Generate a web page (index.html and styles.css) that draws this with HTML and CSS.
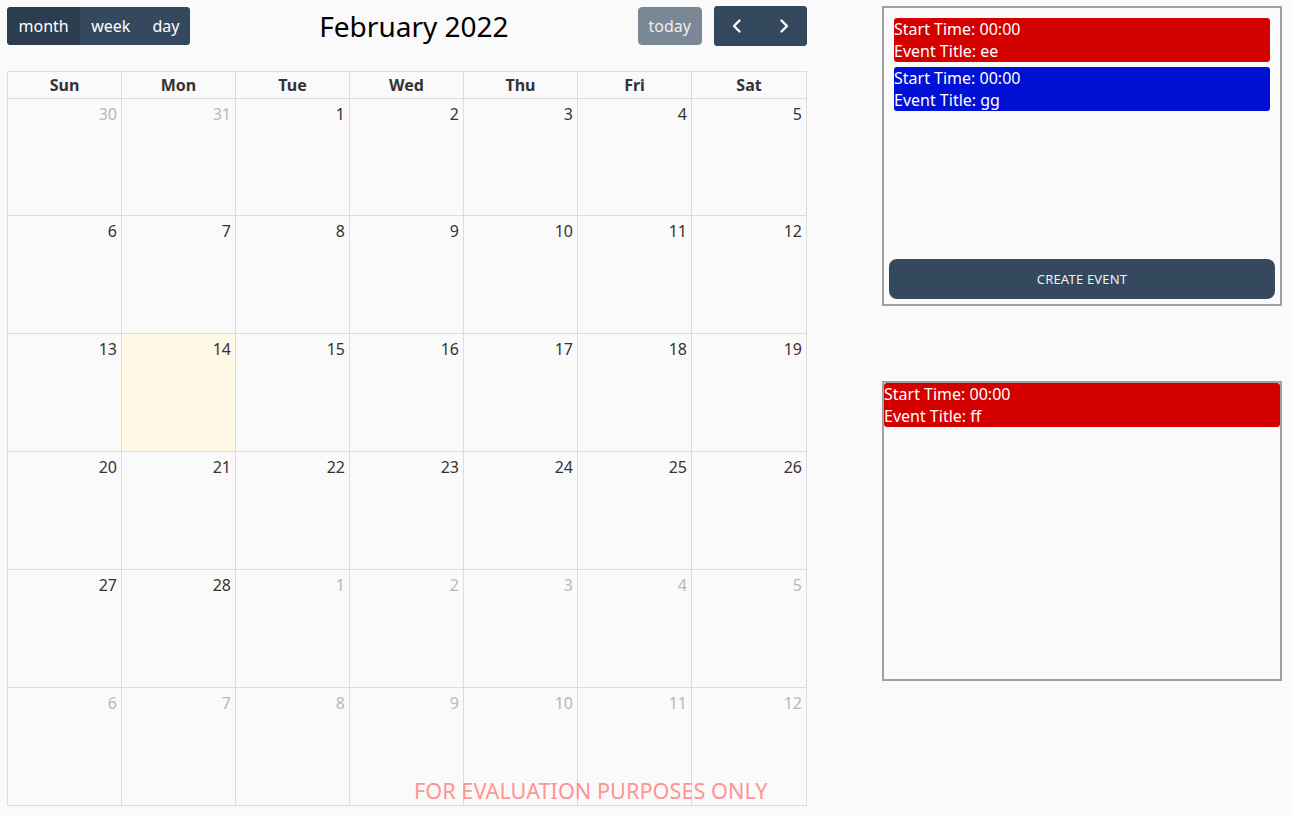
FILE: index.html
```html
<!DOCTYPE html>
<html>
<head>
<meta charset="utf-8">
<link rel="stylesheet" href="styles.css">
</head>
<body>
<div class="page">
  <div class="calendar">
    <div class="toolbar">
      <div class="btn-group">
        <button class="btn active">month</button>
        <button class="btn">week</button>
        <button class="btn">day</button>
      </div>
      <h2 class="title">February 2022</h2>
      <div class="right-tools">
        <button class="btn today">today</button>
        <div class="btn-group nav">
          <button class="btn icon" aria-label="prev"><svg width="12" height="16" viewBox="0 0 12 16"><path d="M8.5 2.5 L3 8 L8.5 13.5" fill="none" stroke="#fff" stroke-width="2.4" stroke-linecap="round" stroke-linejoin="round"/></svg></button>
          <button class="btn icon" aria-label="next"><svg width="12" height="16" viewBox="0 0 12 16"><path d="M3.5 2.5 L9 8 L3.5 13.5" fill="none" stroke="#fff" stroke-width="2.4" stroke-linecap="round" stroke-linejoin="round"/></svg></button>
        </div>
      </div>
    </div>
    <div class="grid-wrap">
      <div class="grid">
        <div class="hd">Sun</div><div class="hd">Mon</div><div class="hd">Tue</div><div class="hd">Wed</div><div class="hd">Thu</div><div class="hd">Fri</div><div class="hd">Sat</div>
        <div class="day other">30</div><div class="day other">31</div><div class="day">1</div><div class="day">2</div><div class="day">3</div><div class="day">4</div><div class="day">5</div>
        <div class="day">6</div><div class="day">7</div><div class="day">8</div><div class="day">9</div><div class="day">10</div><div class="day">11</div><div class="day">12</div>
        <div class="day">13</div><div class="day today-cell">14</div><div class="day">15</div><div class="day">16</div><div class="day">17</div><div class="day">18</div><div class="day">19</div>
        <div class="day">20</div><div class="day">21</div><div class="day">22</div><div class="day">23</div><div class="day">24</div><div class="day">25</div><div class="day">26</div>
        <div class="day">27</div><div class="day">28</div><div class="day other">1</div><div class="day other">2</div><div class="day other">3</div><div class="day other">4</div><div class="day other">5</div>
        <div class="day other">6</div><div class="day other">7</div><div class="day other">8</div><div class="day other">9</div><div class="day other">10</div><div class="day other">11</div><div class="day other">12</div>
      </div>
      <div class="watermark">FOR EVALUATION PURPOSES ONLY</div>
    </div>
  </div>
  <div class="side">
    <div class="box box-one">
      <div class="events">
        <div class="event red">Start Time: 00:00<br>Event Title: ee</div>
        <div class="event blue">Start Time: 00:00<br>Event Title: gg</div>
      </div>
      <button class="create">CREATE EVENT</button>
    </div>
    <div class="box box-two">
      <div class="event red">Start Time: 00:00<br>Event Title: ff</div>
    </div>
  </div>
</div>
</body>
</html>
```

FILE: styles.css
```css
* { box-sizing: border-box; }
html, body { margin: 0; padding: 0; background: #fafafa; }
body { font-family: "Noto Sans", "Open Sans", sans-serif; color: #333; font-size: 16px; }

.page { display: flex; align-items: flex-start; padding: 7px; }
.calendar { width: 800px; }

.toolbar { display: flex; justify-content: space-between; align-items: center; height: 38px; margin-bottom: 26px; }
.btn-group { display: flex; border-radius: 4px; overflow: hidden; }
.btn { font-family: inherit; font-size: 16px; line-height: 24px; color: #fff; background: #35495e; border: 1px solid #35495e; padding: 6px 10px; margin: 0; cursor: pointer; }
.btn.active { background: #2c3d4f; border-color: #2c3d4f; padding-left: 10.5px; padding-right: 10.5px; }
.title { margin: 0; font-size: 28px; font-weight: 400; color: #000; line-height: 38px; }
.right-tools { display: flex; align-items: center; gap: 12px; }
.btn.today { background: #7a8795; border-color: #7a8795; border-radius: 4px; color: #eef0f2; }
.nav { height: 40px; }
.btn.icon { width: 46.5px; height: 40px; padding: 0; display: flex; align-items: center; justify-content: center; }

.grid-wrap { position: relative; }
.grid { display: grid; grid-template-columns: repeat(6, 114px) 115px; grid-template-rows: 27px 117px repeat(5, 118px); border-left: 1px solid #ddd; border-top: 1px solid #ddd; }
.hd, .day { border-right: 1px solid #ddd; border-bottom: 1px solid #ddd; }
.hd { font-weight: 700; text-align: center; line-height: 26px; color: #333; }
.day { text-align: right; padding: 4px 4px 0 0; line-height: 22px; color: #333; }
.day.other { color: #b4b9be; }
.today-cell { background: #fef8e5; }

.watermark { position: absolute; left: 407px; bottom: 1px; font-size: 21.7px; line-height: 28px; color: #ff9494; white-space: nowrap; pointer-events: none; }

.side { margin-left: 75px; margin-top: -1px; width: 400px; }
.box { width: 400px; height: 300px; border: 2px solid #a0a0a0; }
.box-one { display: flex; flex-direction: column; }
.events { padding: 10px 10px 0 10px; display: flex; flex-direction: column; gap: 5px; }
.event { color: #fff; font-size: 16px; line-height: 22px; border-radius: 3px; }
.event.red { background: #d40000; }
.event.blue { background: #0010d4; }
.create { margin: auto 5px 5px 5px; height: 40px; border: none; border-radius: 8px; background: #35495e; color: #f2f2f2; font-family: inherit; font-size: 13px; letter-spacing: 0.2px; }
.box-two { margin-top: 75px; }
```
